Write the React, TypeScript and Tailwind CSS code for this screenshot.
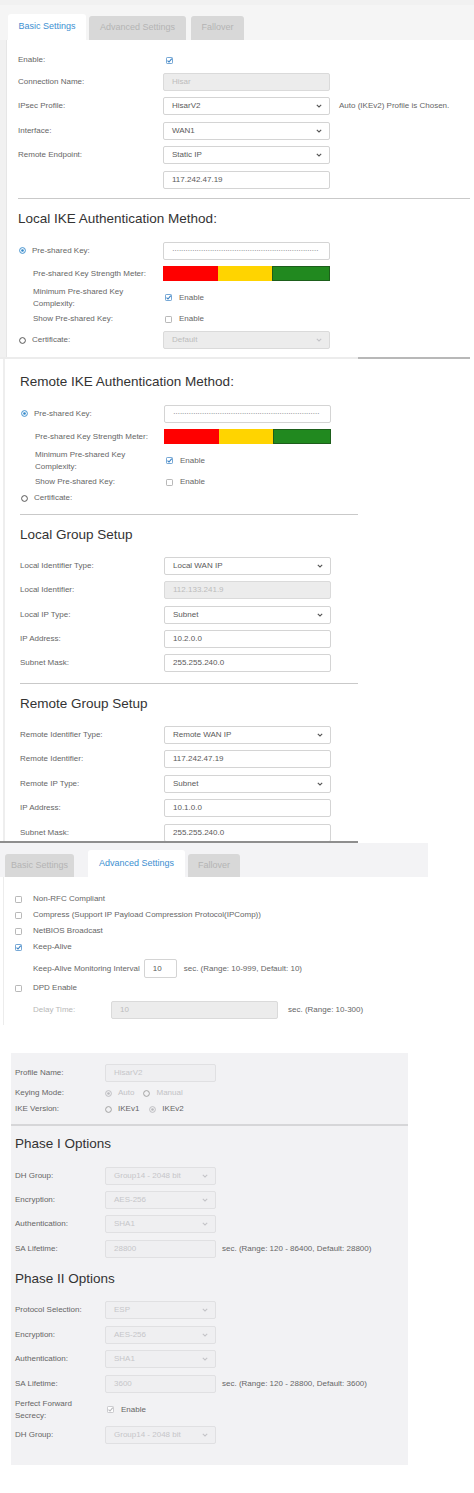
import React from 'react';

const font = "font-['Liberation_Sans',Arial,sans-serif]";

function Chevron({ light }: { light?: boolean }) {
  return (
    <svg width="6" height="4" viewBox="0 0 6 4" className="absolute right-[7px] top-1/2 -translate-y-1/2">
      <path d="M0.8 0.9 L3 3 L5.2 0.9" fill="none" stroke={light ? '#c4c4c8' : '#555'} strokeWidth="1.1" />
    </svg>
  );
}

function Field({
  value,
  w = 'w-[167px]',
  h = 'h-[18px]',
  disabled,
  select,
  tone = 'white',
  dots,
}: {
  value: string;
  w?: string;
  h?: string;
  disabled?: boolean;
  select?: boolean;
  tone?: 'white' | 'grey';
  dots?: boolean;
}) {
  const box = disabled
    ? tone === 'grey'
      ? 'bg-[#efeff1] border-[#e0e0e2] text-[#c6c6c9]'
      : 'bg-[#ececec] border-[#dadada] text-[#bcbcbc]'
    : 'bg-white border-[#d4d4d4] text-[#5a5a5a]';
  return (
    <div className={`relative ${w} ${h} shrink-0 border rounded-[2px] flex items-center pl-[8px] pr-[4px] overflow-hidden whitespace-nowrap text-[8px] ${box}`}>
      <span className={dots ? 'tracking-[-0.45px] text-[#777]' : ''}>{value}</span>
      {select && <Chevron light={disabled} />}
    </div>
  );
}

function Check({ checked, disabled }: { checked?: boolean; disabled?: boolean }) {
  const c = disabled ? '#b8b8bc' : '#3b82c4';
  return (
    <svg width="7" height="7" viewBox="0 0 7 7" className="shrink-0">
      <rect x="0.5" y="0.5" width="6" height="6" rx="0.8" fill="white" stroke={checked ? c : '#9a9a9a'} strokeWidth="0.7" />
      {checked && <path d="M1.5 3.6 L3 5 L5.8 1.6" fill="none" stroke={c} strokeWidth="1.1" />}
    </svg>
  );
}

function Radio({ checked, disabled }: { checked?: boolean; disabled?: boolean }) {
  const c = disabled ? '#b8b8bc' : '#2f86c9';
  return (
    <svg width="7" height="7" viewBox="0 0 7 7" className="shrink-0">
      <circle cx="3.5" cy="3.5" r="2.9" fill="none" stroke={checked ? c : disabled ? '#9a9a9a' : '#444'} strokeWidth="0.9" />
      {checked && <circle cx="3.5" cy="3.5" r="1.3" fill={c} />}
    </svg>
  );
}

function Row({ label, lw, h = 'h-[18px]', mt, children, indent }: { label: React.ReactNode; lw: string; h?: string; mt: string; children?: React.ReactNode; indent?: string }) {
  return (
    <div className={`flex items-center ${h} ${mt}`}>
      <div className={`${lw} shrink-0 text-[8px] text-[#666] leading-[11.5px] ${indent ?? ''}`}>{label}</div>
      {children}
    </div>
  );
}

function Heading({ children, mt }: { children: React.ReactNode; mt: string }) {
  return <div className={`h-[16px] leading-[16px] text-[13.5px] text-[#333] ${mt}`}>{children}</div>;
}

function Meter() {
  return (
    <div className="flex w-[167px] h-[15px] shrink-0">
      <div className="w-[55px] bg-[#ff0000]" />
      <div className="w-[54px] bg-[#ffd400]" />
      <div className="flex-1 bg-[#21891f] border border-[#1d5e1b]" />
    </div>
  );
}

function Enable({ checked }: { checked?: boolean }) {
  return (
    <div className="flex items-center gap-[7px] pl-[2px] text-[8px] text-[#666]">
      <Check checked={checked} />
      Enable
    </div>
  );
}

const DOTS = '·'.repeat(66);

function PskBlock({ lw, first }: { lw: string; first: string }) {
  return (
    <>
      <Row mt={first} lw={lw} h="h-[19px]" label={<span className="flex items-center gap-[6px] pl-[1px]"><Radio checked />Pre-shared Key:</span>}>
        <Field value={DOTS} dots />
      </Row>
      <Row mt="mt-[6px]" lw={lw} h="h-[15px]" indent="pl-[15px]" label="Pre-shared Key Strength Meter:">
        <Meter />
      </Row>
      <Row mt="mt-[5px]" lw={lw} h="h-[23px]" indent="pl-[15px]" label={<>Minimum Pre-shared Key<br />Complexity:</>}>
        <Enable checked />
      </Row>
      <Row mt="mt-[4px]" lw={lw} h="h-[12px]" indent="pl-[15px]" label="Show Pre-shared Key:">
        <Enable />
      </Row>
    </>
  );
}

function Tab({ label, active, w, h, ml }: { label: string; active?: boolean; w: string; h: string; ml: string }) {
  return (
    <div
      className={`${w} ${h} ${ml} rounded-t-[3px] flex items-center justify-center text-[9px] ${
        active ? 'bg-white text-[#3d8fd1]' : 'bg-[#d8d8d8] text-[#b4b4b4]'
      }`}
    >
      {label}
    </div>
  );
}

function BasicPanel() {
  const lw = 'w-[145px]';
  return (
    <div className="bg-[#f1f1f1] pt-[5px]">
      <div className="h-[35px] bg-[#f5f5f5] flex items-end">
        <Tab label="Basic Settings" active w="w-[78px]" h="h-[26px]" ml="ml-[8px]" />
        <Tab label="Advanced Settings" w="w-[97px]" h="h-[24px]" ml="ml-[3px]" />
        <Tab label="Fallover" w="w-[53px]" h="h-[24px]" ml="ml-[5px]" />
      </div>
      <div className="bg-white ml-[6px] border-l border-[#e6e6e6] pl-[11px] pr-[4px] pt-[11px] pb-[8px]">
        <Row mt="" lw={lw} label="Enable:">
          <div className="pl-[3px]"><Check checked /></div>
        </Row>
        <Row mt="mt-[4px]" lw={lw} label="Connection Name:">
          <Field value="Hisar" disabled />
        </Row>
        <Row mt="mt-[6px]" lw={lw} label="IPsec Profile:">
          <Field value="HisarV2" select />
          <span className="ml-[9px] text-[8px] text-[#666] whitespace-nowrap">Auto (IKEv2) Profile is Chosen.</span>
        </Row>
        <Row mt="mt-[7px]" lw={lw} label="Interface:">
          <Field value="WAN1" select />
        </Row>
        <Row mt="mt-[6px]" lw={lw} label="Remote Endpoint:">
          <Field value="Static IP" select />
        </Row>
        <Row mt="mt-[7px]" lw={lw} label="">
          <Field value="117.242.47.19" />
        </Row>
        <div className="mt-[9px] h-px bg-[#c9c9c9]" />
        <Heading mt="mt-[12px]">Local IKE Authentication Method:</Heading>
        <PskBlock lw={lw} first="mt-[14px]" />
        <Row mt="mt-[6px]" lw={lw} label={<span className="flex items-center gap-[6px] pl-[1px]"><Radio />Certificate:</span>}>
          <Field value="Default" select disabled />
        </Row>
      </div>
      <div className="flex h-[2px] bg-white">
        <div className="w-[358px] bg-[#ececec]" />
        <div className="w-[112px] bg-[#b8b8b8]" />
      </div>
    </div>
  );
}

function RemotePanel() {
  const lw = 'w-[144px]';
  return (
    <div className="w-[358px]">
      <div className="h-[482px] overflow-hidden bg-white ml-[3px] border-l-2 border-[#eeeeee] pl-[15px] pt-[15px]">
        <Heading mt="">Remote IKE Authentication Method:</Heading>
        <PskBlock lw={lw} first="mt-[14px]" />
        <Row mt="mt-[4px]" lw={lw} h="h-[12px]" label={<span className="flex items-center gap-[6px] pl-[1px]"><Radio />Certificate:</span>} />
        <div className="mt-[10px] h-px bg-[#c9c9c9]" />
        <Heading mt="mt-[12px]">Local Group Setup</Heading>
        <Row mt="mt-[14px]" lw={lw} label="Local Identifier Type:">
          <Field value="Local WAN IP" select />
        </Row>
        <Row mt="mt-[6px]" lw={lw} label="Local Identifier:">
          <Field value="112.133.241.9" disabled />
        </Row>
        <Row mt="mt-[7px]" lw={lw} label="Local IP Type:">
          <Field value="Subnet" select />
        </Row>
        <Row mt="mt-[6px]" lw={lw} label="IP Address:">
          <Field value="10.2.0.0" />
        </Row>
        <Row mt="mt-[6px]" lw={lw} label="Subnet Mask:">
          <Field value="255.255.240.0" />
        </Row>
        <div className="mt-[11px] h-px bg-[#c9c9c9]" />
        <Heading mt="mt-[12px]">Remote Group Setup</Heading>
        <Row mt="mt-[14px]" lw={lw} label="Remote Identifier Type:">
          <Field value="Remote WAN IP" select />
        </Row>
        <Row mt="mt-[6px]" lw={lw} label="Remote Identifier:">
          <Field value="117.242.47.19" />
        </Row>
        <Row mt="mt-[7px]" lw={lw} label="Remote IP Type:">
          <Field value="Subnet" select />
        </Row>
        <Row mt="mt-[6px]" lw={lw} label="IP Address:">
          <Field value="10.1.0.0" />
        </Row>
        <Row mt="mt-[7px]" lw={lw} label="Subnet Mask:">
          <Field value="255.255.240.0" />
        </Row>
      </div>
      <div className="h-[2px] bg-[#8e8e8e]" />
    </div>
  );
}

function CheckLine({ label, checked, mt = '' }: { label: string; checked?: boolean; mt?: string }) {
  return (
    <div className={`flex items-center h-[16px] ${mt}`}>
      <Check checked={checked} />
      <span className="ml-[11px] text-[8px] text-[#666]">{label}</span>
    </div>
  );
}

function AdvancedPanel() {
  return (
    <div className="w-[428px]">
      <div className="h-[34px] bg-[#f3f3f5] flex items-end">
        <Tab label="Basic Settings" w="w-[69px]" h="h-[23px]" ml="ml-[5px]" />
        <Tab label="Advanced Settings" active w="w-[97px]" h="h-[27px]" ml="ml-[14px]" />
        <Tab label="Fallover" w="w-[52px]" h="h-[23px]" ml="ml-[3px]" />
      </div>
      <div className="bg-white ml-[3px] border-l border-[#ececec] pl-[11px] pt-[14px] pb-[6px] text-[8px] text-[#666]">
        <CheckLine label="Non-RFC Compliant" />
        <CheckLine label="Compress (Support IP Payload Compression Protocol(IPComp))" />
        <CheckLine label="NetBIOS Broadcast" />
        <CheckLine label="Keep-Alive" checked />
        <div className="flex items-center h-[19px] mt-[4px] pl-[18px]">
          <span className="whitespace-nowrap">Keep-Alive Monitoring Interval</span>
          <div className="ml-[4px]">
            <Field value="10" w="w-[33px]" h="h-[19px]" />
          </div>
          <span className="ml-[7px] whitespace-nowrap">sec. (Range: 10-999, Default: 10)</span>
        </div>
        <CheckLine label="DPD Enable" mt="mt-[2px]" />
        <div className="flex items-center h-[18px] mt-[5px] pl-[18px]">
          <span className="w-[78px] text-[#b8b8b8]">Delay Time:</span>
          <Field value="10" disabled />
          <span className="ml-[10px] whitespace-nowrap">sec. (Range: 10-300)</span>
        </div>
      </div>
    </div>
  );
}

function ProfilePanel() {
  const lw = 'w-[90px]';
  return (
    <div className="ml-[11px] w-[397px] h-[412px] bg-[#f2f2f4] pt-[11px]">
      <div className="pl-[4px]">
        <Row mt="" lw={lw} label="Profile Name:">
          <Field value="HisarV2" w="w-[111px]" disabled tone="grey" />
        </Row>
        <Row mt="mt-[5px]" lw={lw} h="h-[12px]" label="Keying Mode:">
          <div className="flex items-center text-[8px] text-[#c2c2c6]">
            <Radio checked disabled />
            <span className="ml-[6px]">Auto</span>
            <span className="ml-[9px]"><Radio disabled /></span>
            <span className="ml-[6px]">Manual</span>
          </div>
        </Row>
        <Row mt="mt-[4px]" lw={lw} h="h-[12px]" label="IKE Version:">
          <div className="flex items-center text-[8px] text-[#666]">
            <Radio disabled />
            <span className="ml-[6px]">IKEv1</span>
            <span className="ml-[10px]"><Radio checked disabled /></span>
            <span className="ml-[6px]">IKEv2</span>
          </div>
        </Row>
      </div>
      <div className="mt-[9px] h-[2px] bg-[#d6d6d8]" />
      <div className="pl-[4px]">
        <Heading mt="mt-[10px]">Phase I Options</Heading>
        <Row mt="mt-[15px]" lw={lw} label="DH Group:">
          <Field value="Group14 - 2048 bit" w="w-[111px]" select disabled tone="grey" />
        </Row>
        <Row mt="mt-[6px]" lw={lw} label="Encryption:">
          <Field value="AES-256" w="w-[111px]" select disabled tone="grey" />
        </Row>
        <Row mt="mt-[6px]" lw={lw} label="Authentication:">
          <Field value="SHA1" w="w-[111px]" select disabled tone="grey" />
        </Row>
        <Row mt="mt-[7px]" lw={lw} label="SA Lifetime:">
          <Field value="28800" w="w-[111px]" disabled tone="grey" />
          <span className="ml-[6px] text-[8px] text-[#666] whitespace-nowrap">sec. (Range: 120 - 86400, Default: 28800)</span>
        </Row>
        <Heading mt="mt-[13px]">Phase II Options</Heading>
        <Row mt="mt-[14px]" lw={lw} label="Protocol Selection:">
          <Field value="ESP" w="w-[111px]" select disabled tone="grey" />
        </Row>
        <Row mt="mt-[7px]" lw={lw} label="Encryption:">
          <Field value="AES-256" w="w-[111px]" select disabled tone="grey" />
        </Row>
        <Row mt="mt-[6px]" lw={lw} label="Authentication:">
          <Field value="SHA1" w="w-[111px]" select disabled tone="grey" />
        </Row>
        <Row mt="mt-[7px]" lw={lw} label="SA Lifetime:">
          <Field value="3600" w="w-[111px]" disabled tone="grey" />
          <span className="ml-[6px] text-[8px] text-[#666] whitespace-nowrap">sec. (Range: 120 - 28800, Default: 3600)</span>
        </Row>
        <Row mt="mt-[5px]" lw={lw} h="h-[23px]" label={<>Perfect Forward<br />Secrecy:</>}>
          <div className="flex items-center gap-[7px] pl-[2px] text-[8px] text-[#666]">
            <Check checked disabled />
            Enable
          </div>
        </Row>
        <Row mt="mt-[5px]" lw={lw} label="DH Group:">
          <Field value="Group14 - 2048 bit" w="w-[111px]" select disabled tone="grey" />
        </Row>
      </div>
    </div>
  );
}

export default function App() {
  return (
    <div className={`w-[474px] min-h-[1493px] bg-white ${font}`}>
      <BasicPanel />
      <RemotePanel />
      <AdvancedPanel />
      <div className="h-[28px]" />
      <ProfilePanel />
    </div>
  );
}
